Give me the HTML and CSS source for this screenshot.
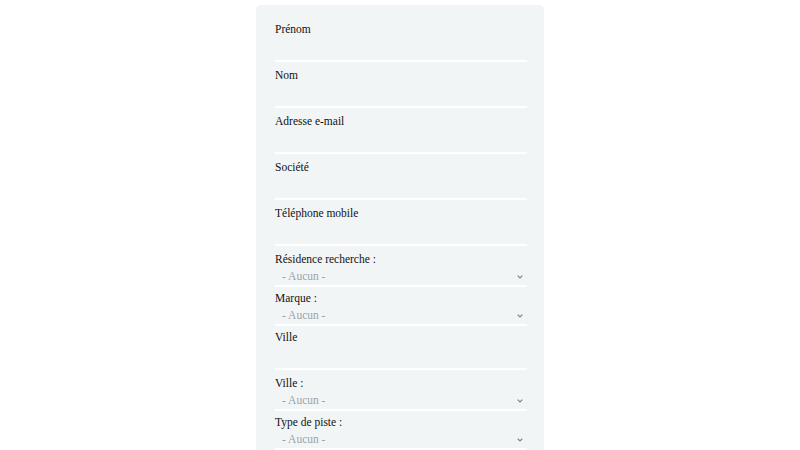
FILE: index.html
```html
<!DOCTYPE html>
<html lang="fr">
<head>
<meta charset="utf-8">
<title>Formulaire</title>
<link rel="stylesheet" href="styles.css">
</head>
<body>
<form class="panel">
  <div class="field">
    <label class="label">Prénom</label>
    <div class="input"></div>
  </div>
  <div class="field">
    <label class="label">Nom</label>
    <div class="input"></div>
  </div>
  <div class="field">
    <label class="label">Adresse e-mail</label>
    <div class="input"></div>
  </div>
  <div class="field">
    <label class="label">Société</label>
    <div class="input"></div>
  </div>
  <div class="field">
    <label class="label">Téléphone mobile</label>
    <div class="input"></div>
  </div>
  <div class="field sel">
    <label class="label">Résidence recherche :</label>
    <div class="select"><span class="opt">- Aucun -</span><svg class="chev" viewBox="0 0 6 4" width="6" height="4"><path d="M0.7 0.7 L3 3 L5.3 0.7" fill="none" stroke="#7d858a" stroke-width="1.2"/></svg></div>
  </div>
  <div class="field sel">
    <label class="label">Marque :</label>
    <div class="select"><span class="opt">- Aucun -</span><svg class="chev" viewBox="0 0 6 4" width="6" height="4"><path d="M0.7 0.7 L3 3 L5.3 0.7" fill="none" stroke="#7d858a" stroke-width="1.2"/></svg></div>
  </div>
  <div class="field">
    <label class="label">Ville</label>
    <div class="input"></div>
  </div>
  <div class="field sel">
    <label class="label">Ville :</label>
    <div class="select"><span class="opt">- Aucun -</span><svg class="chev" viewBox="0 0 6 4" width="6" height="4"><path d="M0.7 0.7 L3 3 L5.3 0.7" fill="none" stroke="#7d858a" stroke-width="1.2"/></svg></div>
  </div>
  <div class="field sel">
    <label class="label">Type de piste :</label>
    <div class="select"><span class="opt">- Aucun -</span><svg class="chev" viewBox="0 0 6 4" width="6" height="4"><path d="M0.7 0.7 L3 3 L5.3 0.7" fill="none" stroke="#7d858a" stroke-width="1.2"/></svg></div>
  </div>
</form>
</body>
</html>
```
FILE: styles.css
```css
html, body {
  margin: 0;
  padding: 0;
  background: #ffffff;
}
body {
  font-family: "Liberation Serif", "Times New Roman", serif;
  color: #111111;
  height: 450px;
  overflow: hidden;
}
.panel {
  width: 252px;
  margin: 5px 0 0 256px;
  padding: 17px 17px 0 19px;
  background: #f2f5f6;
  border-radius: 5px;
  height: 460px;
}
.field {
  margin-bottom: 6px;
}
.field.sel {
  margin-bottom: 4px;
}
.label {
  display: block;
  font-size: 11.5px;
  line-height: 14px;
  height: 14px;
  white-space: nowrap;
}
.input {
  height: 24px;
  border-bottom: 2px solid #ffffff;
}
.select {
  height: 17px;
  padding: 2px 4px 0 7px;
  border-bottom: 2px solid #ffffff;
  display: flex;
  align-items: center;
  justify-content: space-between;
}
.opt {
  font-size: 11.5px;
  color: #9aa3a8;
  line-height: 17px;
}
.chev {
  display: block;
}
```
